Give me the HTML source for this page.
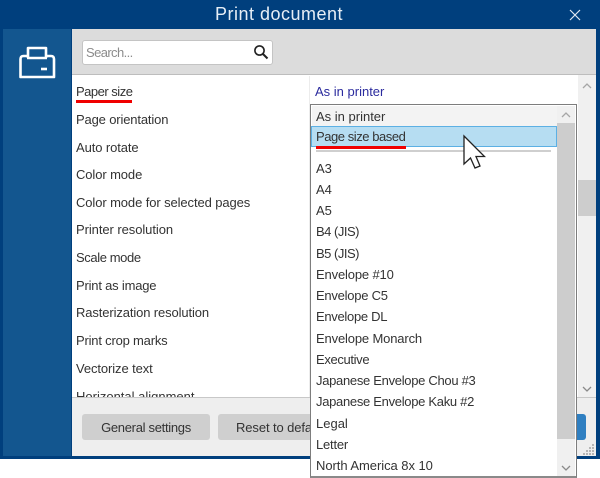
<!DOCTYPE html>
<html><head><meta charset="utf-8"><style>
html,body{margin:0;padding:0;background:#fff}
body{width:600px;height:478px;position:relative;overflow:hidden;font-family:"Liberation Sans",sans-serif;font-size:13px;color:#333;filter:blur(.35px)}
div{position:absolute;box-sizing:border-box;white-space:nowrap}
.l{left:76px;line-height:16px}
.d{left:316px;line-height:16px}
.b{background:#cfcfcf;border-radius:3px;height:26px;top:414px;text-align:center;line-height:28px}
</style></head><body>
<div style="left:0;top:0;width:600px;height:459px;background:#003f7d"></div>
<div style="left:3px;top:29px;width:68px;height:427px;background:#13568f"></div>
<div style="left:72px;top:29px;width:524px;height:46px;background:#dcdcdc;border-bottom:1px solid #bdbdbd"></div>
<div style="left:72px;top:75px;width:524px;height:322px;background:#fff;overflow:hidden"></div>
<div style="left:72px;top:397px;width:524px;height:59px;background:#eee;border-top:1px solid #c8c8c8"></div>
<div style="left:0;top:0;width:558px;height:28px;text-align:center;color:#e6eef6;font-size:18px;line-height:28px;letter-spacing:.5px">Print document</div>
<svg style="position:absolute;left:569px;top:9px" width="12" height="12" viewBox="0 0 12 12"><path d="M1 1L11 11M11 1L1 11" stroke="#dfe8f2" stroke-width="1.2" fill="none"/></svg>
<svg style="position:absolute;left:19px;top:46px" width="37" height="33" viewBox="0 0 37 33" fill="none" stroke="#fff" stroke-width="2.6" stroke-linejoin="round"><path d="M9 12V2h18v10"/><path d="M8 10H4.500Q1.500 10 1.500 13V31H35V13Q35 10 32 10H28"/><path d="M8 12H28"/><path d="M22 23h6" stroke-width="2.600"/></svg>
<div style="left:82px;top:40px;width:191px;height:25px;background:#fff;border:1px solid #c4c4c4;border-radius:3px"></div>
<div style="left:86px;top:45px;color:#8c8c8c;line-height:16px;letter-spacing:-.6px">Search...</div>
<svg style="position:absolute;left:253px;top:44px" width="16" height="16" viewBox="0 0 16 16" fill="none" stroke="#222" stroke-width="1.6"><circle cx="6.500" cy="6.500" r="4.600"/><path d="M10 10L14.500 14.500" stroke-width="2"/></svg>

<div class="l" style="top:84px;letter-spacing:-.5px">Paper size</div>
<div style="left:76px;top:100px;width:56px;height:3px;background:#f00000"></div>
<div class="l" style="top:112px;letter-spacing:-.15px">Page orientation</div>
<div class="l" style="top:140px;letter-spacing:-.1px">Auto rotate</div>
<div class="l" style="top:167px;letter-spacing:-.1px">Color mode</div>
<div class="l" style="top:195px;letter-spacing:-.1px">Color mode for selected pages</div>
<div class="l" style="top:222px;letter-spacing:-.07px">Printer resolution</div>
<div class="l" style="top:250px;letter-spacing:-.4px">Scale mode</div>
<div class="l" style="top:278px;letter-spacing:-.2px">Print as image</div>
<div class="l" style="top:305px;letter-spacing:-.12px">Rasterization resolution</div>
<div class="l" style="top:333px;letter-spacing:-.2px">Print crop marks</div>
<div class="l" style="top:361px;letter-spacing:-.1px">Vectorize text</div>
<div style="left:72px;top:389px;width:240px;height:8px;overflow:hidden"><div class="l" style="left:4px;top:0">Horizontal alignment</div></div>
<div style="left:309px;top:76px;width:1px;height:321px;background:#ececec"></div>
<div style="left:315px;top:84px;color:#2b2b9e;line-height:16px">As in printer</div>

<div style="left:578px;top:75px;width:18px;height:322px;background:#f0f0f0"></div>
<div style="left:578px;top:180px;width:18px;height:36px;background:#cdcdcd"></div>
<svg style="position:absolute;left:582px;top:83px" width="10" height="6" viewBox="0 0 10 6"><path d="M1 5L5 1L9 5" stroke="#a6a6a6" stroke-width="1.300" fill="none"/></svg>
<svg style="position:absolute;left:582px;top:386px" width="10" height="6" viewBox="0 0 10 6"><path d="M1 1L5 5L9 1" stroke="#8a8a8a" stroke-width="1.300" fill="none"/></svg>

<div class="b" style="left:82px;width:128px;letter-spacing:-.3px">General settings</div>
<div class="b" style="left:218px;width:120px;text-align:left;padding-left:18px;letter-spacing:-.1px">Reset to defaults</div>
<div style="left:570px;top:414px;width:16px;height:26px;background:#2f7fc1;border-radius:0 3px 3px 0"></div>
<svg style="position:absolute;left:583px;top:443px" width="12" height="12" viewBox="0 0 12 12" fill="#b5b5b5"><path d="M9 1h2v2H9zM6 4h2v2H6zM9 4h2v2H9zM3 7h2v2H3zM6 7h2v2H6zM9 7h2v2H9zM0 10h2v2H0zM3 10h2v2H3zM6 10h2v2H6zM9 10h2v2H9z"/></svg>

<div style="left:310px;top:104px;width:267px;height:374px;background:#fff;border:1px solid #7d7d7d;border-bottom:2px solid #8a8a8a"></div>
<div style="left:312px;top:106px;width:245px;height:20px;background:#f3f3f3"></div>
<div style="left:557px;top:106px;width:18px;height:370px;background:#f0f0f0"></div>
<div style="left:557px;top:123px;width:18px;height:316px;background:#cdcdcd"></div>
<svg style="position:absolute;left:561px;top:112px" width="10" height="6" viewBox="0 0 10 6"><path d="M1 5L5 1L9 5" stroke="#a6a6a6" stroke-width="1.300" fill="none"/></svg>
<svg style="position:absolute;left:561px;top:465px" width="10" height="6" viewBox="0 0 10 6"><path d="M1 1L5 5L9 1" stroke="#8a8a8a" stroke-width="1.300" fill="none"/></svg>
<div style="left:311px;top:126px;width:246px;height:21px;background:#b6ddf2;border:1px solid #5cb0e4"></div>
<div style="left:316px;top:150px;width:235px;height:2px;background:#cfcfcf"></div>
<div style="left:316px;top:146px;width:90px;height:3px;background:#f00000"></div>

<div class="d" style="top:109px">As in printer</div>
<div class="d" style="top:129px;letter-spacing:-.45px">Page size based</div>
<div class="d" style="top:161px">A3</div>
<div class="d" style="top:182px">A4</div>
<div class="d" style="top:203px">A5</div>
<div class="d" style="top:224px;letter-spacing:-.5px">B4 (JIS)</div>
<div class="d" style="top:246px;letter-spacing:-.5px">B5 (JIS)</div>
<div class="d" style="top:267px;letter-spacing:-.15px">Envelope #10</div>
<div class="d" style="top:288px;letter-spacing:-.25px">Envelope C5</div>
<div class="d" style="top:309px;letter-spacing:-.3px">Envelope DL</div>
<div class="d" style="top:331px;letter-spacing:-.15px">Envelope Monarch</div>
<div class="d" style="top:352px;letter-spacing:-.35px">Executive</div>
<div class="d" style="top:373px;letter-spacing:-.3px">Japanese Envelope Chou #3</div>
<div class="d" style="top:394px;letter-spacing:-.3px">Japanese Envelope Kaku #2</div>
<div class="d" style="top:416px">Legal</div>
<div class="d" style="top:437px;letter-spacing:-.2px">Letter</div>
<div class="d" style="top:458px;letter-spacing:-.05px">North America 8x 10</div>

<svg style="position:absolute;left:462px;top:134px" width="24" height="36" viewBox="0 0 24 36"><path d="M2 2V30L8.500 24L13 34L18 32L14 22.500H22.500Z" fill="#fff" stroke="#222" stroke-width="1.300" stroke-linejoin="miter"/></svg>
</body></html>
